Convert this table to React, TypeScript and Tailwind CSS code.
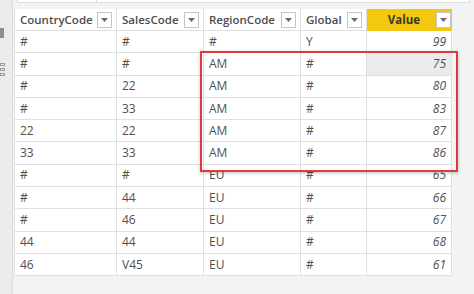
import React from 'react';

const columns = [
    { name: 'CountryCode', w: 'w-[102px]' },
    { name: 'SalesCode', w: 'w-[87px]' },
    { name: 'RegionCode', w: 'w-[97px]' },
    { name: 'Global', w: 'w-[66px]' },
];

const rows = [
    ['#', '#', '#', 'Y', '99'],
    ['#', '#', 'AM', '#', '75'],
    ['#', '22', 'AM', '#', '80'],
    ['#', '33', 'AM', '#', '83'],
    ['22', '22', 'AM', '#', '87'],
    ['33', '33', 'AM', '#', '86'],
    ['#', '#', 'EU', '#', '65'],
    ['#', '44', 'EU', '#', '66'],
    ['#', '46', 'EU', '#', '67'],
    ['44', '44', 'EU', '#', '68'],
    ['46', 'V45', 'EU', '#', '61'],
];

function FilterButton() {
    return (
        <div className="w-[15px] h-[16px] bg-white border border-[#c6c6c6] flex items-center justify-center shrink-0">
            <svg width="7" height="4" viewBox="0 0 7 4">
                <path d="M0 0 H7 L3.5 4 Z" fill="#6b6b6b" />
            </svg>
        </div>
    );
}

export default function App() {
    return (
        <div
            className="w-[474px] h-[294px] bg-[#f3f3f3] flex overflow-hidden text-[#4a4a4a]"
            style={{ fontFamily: '"Open Sans", "Noto Sans", sans-serif' }}
        >
            {/* left rail */}
            <div className="w-[13px] shrink-0 bg-[#ebebeb] border-r border-[#dcdcdc] flex flex-col">
                <div className="mt-[28px] w-[4px] h-[10px] bg-[#8c8c8c]" />
                <div className="mt-[25px] flex flex-col gap-[2px] w-[5px]">
                    <div className="h-[3px] border border-[#9a9a9a]" />
                    <div className="h-[3px] border border-[#9a9a9a]" />
                    <div className="h-[3px] border border-[#9a9a9a]" />
                </div>
            </div>

            <div className="flex-1 pl-[1px] flex flex-col">
                {/* bottom edge of formula bar */}
                <div className="h-[3px] ml-[3px] mr-[4px] bg-white border-x border-b border-[#dedede] flex">
                    <div className="w-[79px] border-r border-[#dedede]" />
                </div>

                <div className="relative mt-[6px] w-fit">
                    {/* header */}
                    <div className="flex h-[22px] border-l border-[#e0e0e0]">
                        {columns.map((c) => (
                            <div
                                key={c.name}
                                className={`${c.w} bg-white border-r border-b border-[#e0e0e0] flex items-center justify-between pl-[5px] pr-[4px] text-[11.5px] font-semibold text-[#4d4d4d]`}
                            >
                                <span>{c.name}</span>
                                <FilterButton />
                            </div>
                        ))}
                        <div className="w-[85px] bg-[#f2c811] flex items-center pl-[17px] pr-[1px] text-[11.5px] font-bold text-[#3a3a2a]">
                            <span className="flex-1 text-center pr-[12px]">Value</span>
                            <FilterButton />
                        </div>
                    </div>

                    {/* rows */}
                    {rows.map((r, i) => (
                        <div key={i} className="flex h-[22.3px] border-l border-[#e0e0e0] text-[12px] text-[#4f4f4f]">
                            {columns.map((c, j) => (
                                <div
                                    key={c.name}
                                    className={`${c.w} bg-white border-r border-b border-[#e0e0e0] flex items-center pl-[5px]`}
                                >
                                    {r[j]}
                                </div>
                            ))}
                            <div
                                className={`w-[85px] border-r border-b border-[#e0e0e0] flex items-center justify-end pr-[5px] italic ${
                                    i === 1 ? 'bg-[#ebebeb]' : 'bg-white'
                                }`}
                            >
                                {r[4]}
                            </div>
                        </div>
                    ))}

                    {/* highlight box */}
                    <div className="absolute left-[186px] top-[42px] w-[258px] h-[121px] border-2 border-[#e0393e] shadow-[0_1px_3px_rgba(0,0,0,0.25)] pointer-events-none" />
                </div>
            </div>
        </div>
    );
}
